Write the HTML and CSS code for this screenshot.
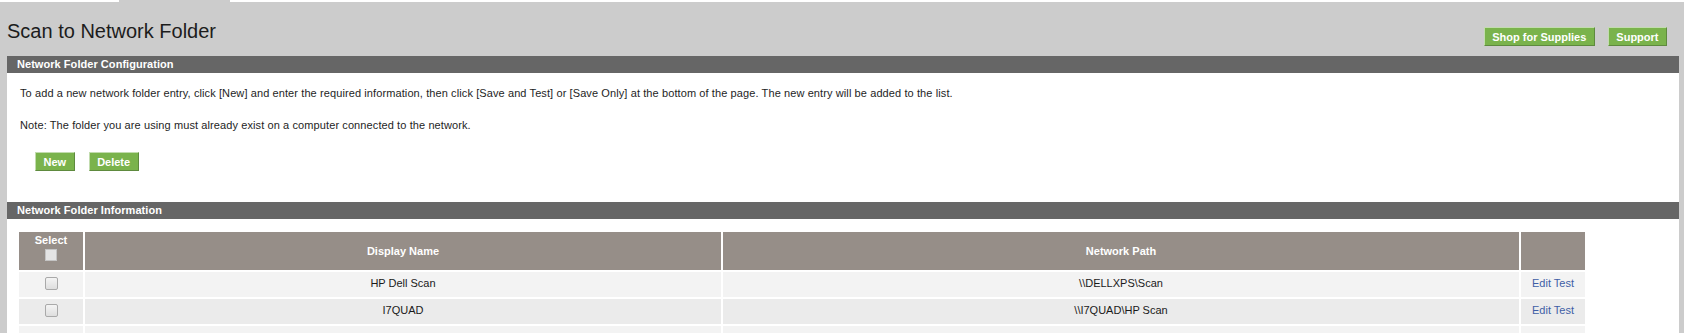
FILE: index.html
```html
<!DOCTYPE html>
<html lang="en">
<head>
<meta charset="utf-8">
<title>Scan to Network Folder</title>
<link rel="stylesheet" href="styles.css">
</head>
<body>
<div class="topstrip"><div class="tab"></div></div>
<header class="masthead">
  <h1 class="title">Scan to Network Folder</h1>
  <div class="top-actions">
    <a class="btn" href="#">Shop for Supplies</a>
    <a class="btn" href="#">Support</a>
  </div>
</header>
<main class="panel">
  <h2 class="bar">Network Folder Configuration</h2>
  <div class="section-body">
    <p class="intro">To add a new network folder entry, click [New] and enter the required information, then click [Save and Test] or [Save Only] at the bottom of the page. The new entry will be added to the list.</p>
    <p class="note">Note: The folder you are using must already exist on a computer connected to the network.</p>
    <div class="btn-row">
      <button class="btn" type="button">New</button>
      <button class="btn" type="button">Delete</button>
    </div>
  </div>
  <h2 class="bar">Network Folder Information</h2>
  <div class="table-wrap">
    <table class="folders">
      <colgroup>
        <col class="c-select">
        <col class="c-name">
        <col class="c-path">
        <col class="c-actions">
      </colgroup>
      <thead>
        <tr>
          <th class="th-select"><span class="sel-label">Select</span><span class="hcheck"></span></th>
          <th>Display Name</th>
          <th>Network Path</th>
          <th></th>
        </tr>
      </thead>
      <tbody>
        <tr>
          <td><input class="check" type="checkbox"></td>
          <td>HP Dell Scan</td>
          <td>\\DELLXPS\Scan</td>
          <td><a class="link" href="#">Edit</a> <a class="link" href="#">Test</a></td>
        </tr>
        <tr class="alt">
          <td><input class="check" type="checkbox"></td>
          <td>I7QUAD</td>
          <td>\\I7QUAD\HP Scan</td>
          <td><a class="link" href="#">Edit</a> <a class="link" href="#">Test</a></td>
        </tr>
        <tr>
          <td></td>
          <td></td>
          <td></td>
          <td></td>
        </tr>
      </tbody>
    </table>
  </div>
</main>
</body>
</html>
```
FILE: styles.css
```css
html, body {
  margin: 0;
  padding: 0;
}

body {
  background: #cccccc;
  font-family: "Liberation Sans", Arial, sans-serif;
  font-size: 11px;
  color: #222222;
}

.topstrip {
  height: 2px;
  background: #ffffff;
  display: flex;
}

.tab {
  width: 111px;
  margin-left: 119px;
  background: #cccccc;
}

.masthead {
  height: 54px;
  display: flex;
  justify-content: space-between;
  align-items: flex-start;
  padding: 0 17px 0 7px;
}

.title {
  margin: 18px 0 0;
  font-size: 20px;
  font-weight: normal;
  line-height: 23px;
  color: #1c1c1c;
}

.top-actions {
  display: flex;
  gap: 13px;
  margin-top: 25px;
}

.btn {
  box-sizing: border-box;
  display: inline-flex;
  align-items: center;
  height: 19px;
  padding: 0 7.5px;
  margin: 0;
  background: #7ab34c;
  color: #ffffff;
  font-family: "Liberation Sans", Arial, sans-serif;
  font-weight: bold;
  font-size: 11px;
  text-decoration: none;
  border: 1px solid;
  border-color: #c2dcae #5e8a3e #5e8a3e #c2dcae;
  cursor: pointer;
}

.panel {
  margin: 0 5px 0 7px;
  background: #ffffff;
  min-height: 300px;
}

.bar {
  margin: 0;
  height: 17px;
  line-height: 17px;
  background: #666666;
  color: #ffffff;
  font-size: 11px;
  font-weight: bold;
  padding-left: 10px;
  letter-spacing: 0.05px;
}

.section-body {
  padding: 14px 13px 31px;
}

.section-body p {
  margin: 0 0 19px;
  line-height: 13px;
  letter-spacing: 0.1px;
  color: #1e1e1e;
}

.section-body p.note {
  margin-bottom: 20px;
}

.btn-row {
  display: flex;
  gap: 14px;
  padding-left: 15px;
}

.table-wrap {
  padding: 11px 0 0 10px;
}

.folders {
  border-collapse: separate;
  border-spacing: 2px;
  table-layout: fixed;
  width: 1570px;
}

.c-select { width: 64px; }
.c-name { width: 636px; }
.c-path { width: 796px; }
.c-actions { width: 64px; }

.folders th {
  height: 36px;
  padding: 0;
  background: #968e88;
  color: #ffffff;
  font-weight: bold;
  font-size: 11px;
  text-align: center;
  vertical-align: middle;
}

.folders th.th-select {
  vertical-align: top;
  padding-top: 2px;
}

.sel-label {
  display: block;
  line-height: 13px;
}

.hcheck {
  display: block;
  box-sizing: border-box;
  width: 12px;
  height: 12px;
  margin: 2px auto 0;
  background: #e4e4e4;
  border: 1px solid #c4c4c4;
}

.folders td {
  height: 22px;
  padding: 0 0 3px;
  background: #f3f3f3;
  text-align: center;
  vertical-align: middle;
  color: #1a1a1a;
}

.folders tr.alt td {
  background: #ebebeb;
}

.check {
  appearance: none;
  -webkit-appearance: none;
  box-sizing: border-box;
  width: 13px;
  height: 13px;
  margin: 0;
  vertical-align: middle;
  border: 1px solid #a9a9a9;
  border-radius: 2px;
  background: linear-gradient(#f4f4f4, #dedede);
}

.link {
  color: #3e5ea6;
  text-decoration: none;
}
```
